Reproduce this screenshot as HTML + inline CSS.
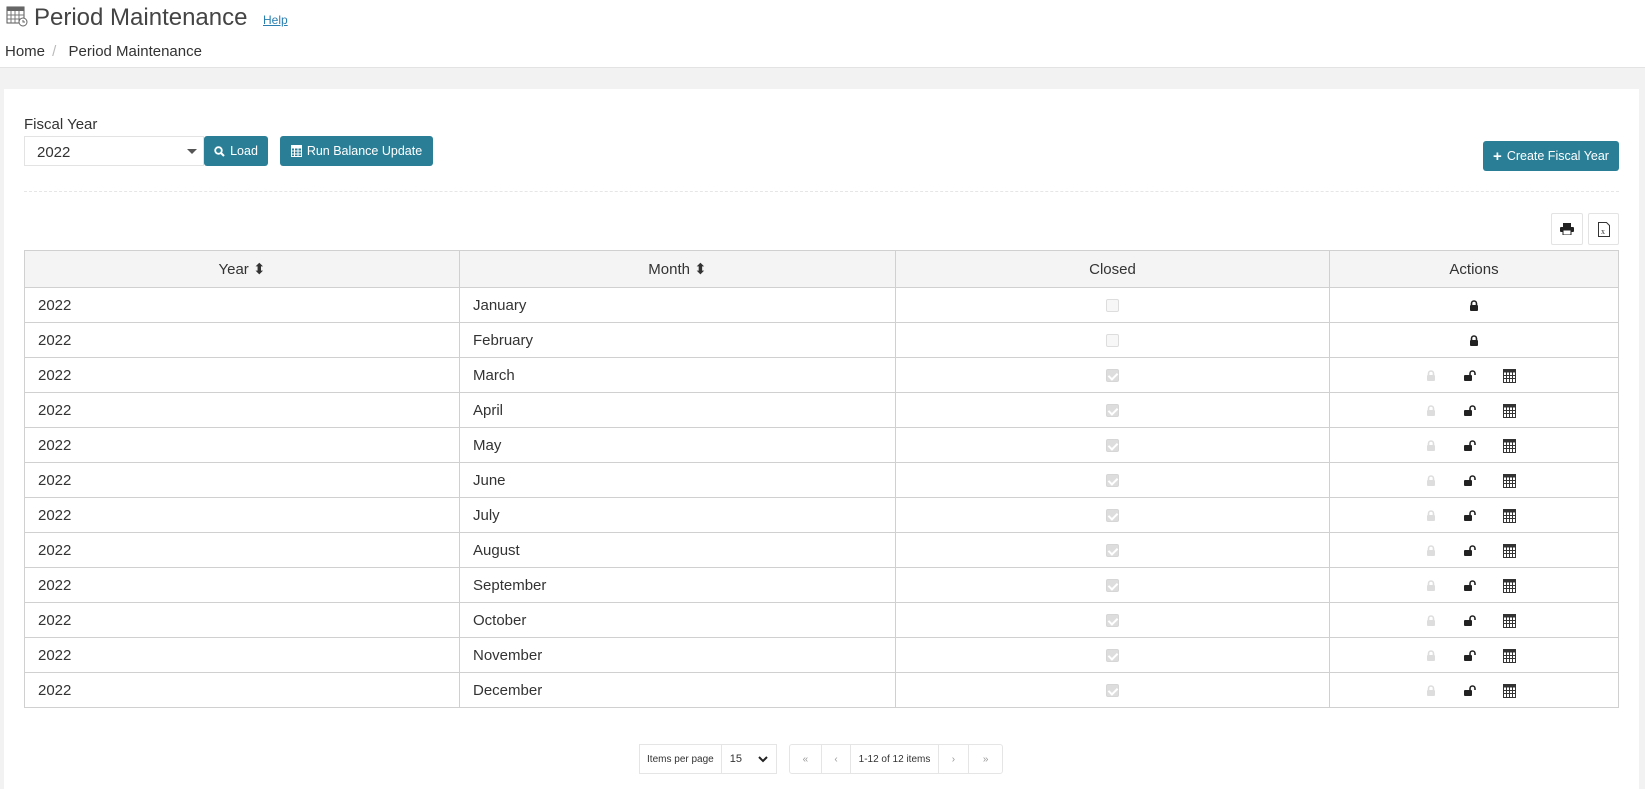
<!DOCTYPE html>
<html><head><meta charset="utf-8"><style>
*{box-sizing:border-box;margin:0;padding:0}
body{width:1645px;height:779px;overflow:hidden;background:#f2f2f2;font-family:"Liberation Sans",sans-serif;color:#333;font-size:15px;position:relative}
.top{position:absolute;left:0;top:0;width:1645px;height:68px;background:#fff;border-bottom:1px solid #e3e3e3}
.title{position:absolute;left:34px;top:4px;font-size:24px;font-weight:300;color:#444}
.help{position:absolute;left:263px;top:13px;font-size:12px;color:#2a7fb0;text-decoration:underline}
.bc{position:absolute;left:5px;top:43px;font-size:15px;color:#333}
.bc span{color:#bbb;margin:0 8px 0 3px}
.card{position:absolute;left:4px;top:89px;width:1635px;height:700px;background:#fff}
.abs{position:absolute}
.btn{position:absolute;background:#2a7f97;color:#fff;border-radius:3px;font-size:12.5px;display:flex;align-items:center;justify-content:center;gap:5px}
table{position:absolute;left:24px;top:250px;width:1595px;border-collapse:collapse}
td,th{border:1px solid #d0d0d0;height:35px;font-size:15px}
th{background:#f4f4f4;font-weight:normal;height:37px;color:#333}
td{padding-left:13px}
td.c{text-align:center;padding:0}
td.c svg{vertical-align:middle}
.cb{display:inline-block;width:13px;height:13px;border:1px solid #ddd;border-radius:2px;background:#f7f7f7;vertical-align:middle}
.cb.k{background:#ddd;border-color:#d6d6d6;position:relative}
.cb.k:after{content:"";position:absolute;left:3px;top:1px;width:4px;height:7px;border:solid #fff;border-width:0 2px 2px 0;transform:rotate(45deg)}
.pg{position:absolute;top:744px;height:30px;border:1px solid #e5e5e5;display:flex;font-size:10px;color:#333;background:#fff}
.pg div{border-right:1px solid #e5e5e5;display:flex;align-items:center;justify-content:center}
.pg div:last-child{border-right:none}
</style></head><body>
<div class="top">
<svg class="abs" style="left:6px;top:5px" width="22" height="22" viewBox="0 0 22 22"><rect x="1" y="2" width="17" height="16" fill="#fff" stroke="#555"/><rect x="1" y="2" width="17" height="4" fill="#666"/><g stroke="#777" stroke-width="1"><path d="M1 10h17M1 14h17M5 6v12M9 6v12M13 6v12"/></g><circle cx="17" cy="17" r="4" fill="#fff" stroke="#666"/><path d="M17 15v2h2" stroke="#666" fill="none"/></svg>
<div class="title">Period Maintenance</div>
<div class="help">Help</div>
<div class="bc">Home<span> /</span> Period Maintenance</div>
</div>
<div class="card"></div>
<div class="abs" style="left:24px;top:116px;font-size:15px">Fiscal Year</div>
<div class="abs" style="left:24px;top:136px;width:180px;height:30px;border:1px solid #e3e3e3;font-size:15px;padding:7px 12px">2022<span style="position:absolute;right:6px;top:12px;border:5px solid transparent;border-top:5px solid #555"></span></div>
<div class="btn" style="left:204px;top:136px;width:64px;height:30px"><svg width="11" height="11" viewBox="0 0 11 11"><circle cx="4.5" cy="4.5" r="3.3" fill="none" stroke="#fff" stroke-width="1.8"/><path d="M7 7l3 3" stroke="#fff" stroke-width="2"/></svg>Load</div>
<div class="btn" style="left:280px;top:136px;width:153px;height:30px"><svg width="11" height="12" viewBox="0 0 11 12"><rect x="0.5" y="0.5" width="10" height="11" fill="none" stroke="#fff"/><rect x="0.5" y="0.5" width="10" height="3" fill="#fff"/><path d="M0 6h11M0 9h11M3.5 3v9M7 3v9" stroke="#fff"/></svg>Run Balance Update</div>
<div class="btn" style="left:1483px;top:141px;width:136px;height:30px"><b style="font-size:15px">+</b>Create Fiscal Year</div>
<div class="abs" style="left:24px;top:191px;width:1595px;border-top:1px dashed #e6e6e6"></div>
<div class="abs" style="left:1551px;top:213px;width:32px;height:32px;border:1px solid #e3e3e3;border-radius:2px"><svg style="margin:9px 0 0 8px" width="14" height="12" viewBox="0 0 14 12"><rect x="3" y="0" width="8" height="4" fill="#222"/><rect x="0" y="4" width="14" height="5" rx="1" fill="#222"/><rect x="3" y="7" width="8" height="5" fill="#fff" stroke="#222"/></svg></div>
<div class="abs" style="left:1588px;top:213px;width:31px;height:32px;border:1px solid #e3e3e3;border-radius:2px"><svg style="margin:8px 0 0 9px" width="12" height="15" viewBox="0 0 12 15"><path d="M0.5 0.5h8l3 3v11h-11z" fill="#fff" stroke="#333"/><text x="3" y="12" font-size="8" font-family="Liberation Serif" fill="#333">x</text></svg></div>
<table>
<tr><th style="width:435px">Year ⬍</th><th style="width:436px">Month ⬍</th><th style="width:434px">Closed</th><th>Actions</th></tr>
</table>
<script>
var m=["January","February","March","April","May","June","July","August","September","October","November","December"];
var lock='<svg width="10" height="11" viewBox="0 0 10 11"><path d="M2.5 5V3.5a2.5 2.5 0 0 1 5 0V5" fill="none" stroke="C" stroke-width="1.6"/><rect x="1" y="5" width="8" height="6" rx="1" fill="C"/></svg>';
var unl='<svg width="12" height="11" viewBox="0 0 12 11"><path d="M6 5V3.5a2.5 2.5 0 0 1 5 0V5" fill="none" stroke="#222" stroke-width="1.6"/><rect x="0" y="5" width="8" height="6" rx="1" fill="#222"/></svg>';
var calc='<svg width="13" height="14" viewBox="0 0 13 14"><rect x="0.5" y="0.5" width="12" height="13" fill="#fff" stroke="#333"/><rect x="0.5" y="0.5" width="12" height="3" fill="#333"/><path d="M0 6.5h13M0 9.5h13M3.5 3v11M6.5 3v11M9.5 3v11" stroke="#333"/></svg>';
var h='';
m.forEach(function(x,i){var closed=i>1;
h+='<tr><td>2022</td><td>'+x+'</td><td class="c"><span class="cb'+(closed?' k':'')+'"></span></td><td class="c">'+
(closed?'<span style="display:inline-block;width:240px;text-align:left;padding-left:72px">'+lock.replace(/C/g,'#ddd')+'<span style="margin-left:28px">'+unl+'</span><span style="margin-left:27px">'+calc+'</span></span>':lock.replace(/C/g,'#222'))+'</td></tr>';});
document.querySelector('table').insertAdjacentHTML('beforeend',h);
</script>
<div class="pg" style="left:639px;width:138px"><div style="width:83px">Items per page</div><div style="width:55px;font-size:11px;justify-content:space-around">15 <svg width="10" height="7" viewBox="0 0 10 7"><path d="M1 1l4 4 4-4" fill="none" stroke="#222" stroke-width="2"/></svg></div></div>
<div class="pg" style="left:789px;width:214px;color:#999;border-radius:3px"><div style="width:32px">«</div><div style="width:30px">‹</div><div style="width:88px;color:#333">1-12 of 12 items</div><div style="width:31px">›</div><div style="width:33px">»</div></div>
</body></html>
